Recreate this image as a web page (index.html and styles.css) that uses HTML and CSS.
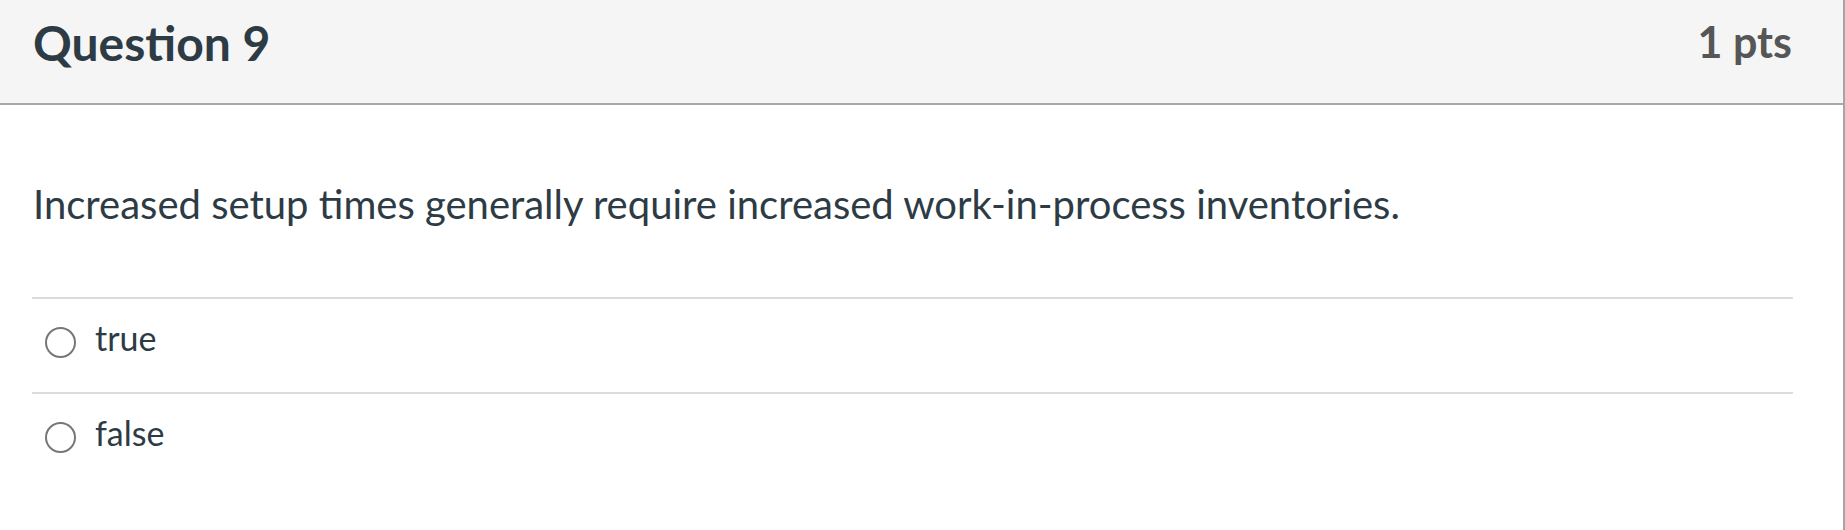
FILE: index.html
```html
<!DOCTYPE html>
<html lang="en">
<head>
<meta charset="utf-8">
<title>Question 9</title>
<link rel="stylesheet" href="styles.css">
</head>
<body>
<div class="question">
  <div class="q-header">
    <h2 class="q-title">Question 9</h2>
    <span class="q-points">1 pts</span>
  </div>
  <div class="q-body">
    <p class="q-text">Increased setup times generally require increased work-in-process inventories.</p>
    <div class="answers">
      <label class="answer">
        <span class="radio"></span>
        <span class="answer-label">true</span>
      </label>
      <label class="answer">
        <span class="radio"></span>
        <span class="answer-label">false</span>
      </label>
    </div>
  </div>
</div>
</body>
</html>
```

FILE: styles.css
```css
html, body {
  margin: 0;
  padding: 0;
  background: #ffffff;
}
body {
  font-family: Lato, "Open Sans", "Liberation Sans", sans-serif;
  color: #2d3b45;
  width: 1845px;
  height: 530px;
  overflow: hidden;
}
.question {
  box-sizing: border-box;
  width: 1845px;
  height: 530px;
  border-right: 2px solid #a5a5a5;
}
.q-header {
  display: flex;
  justify-content: space-between;
  align-items: flex-start;
  background: #f5f5f5;
  height: 105px;
  box-sizing: border-box;
  padding: 0 51px 0 33px;
  border-bottom: 2px solid #a8a8a8;
}
.q-title {
  margin: 0;
  font-size: 48px;
  font-weight: 700;
  line-height: 58px;
  padding-top: 14px;
  color: #2d3b45;
}
.q-points {
  font-size: 43px;
  font-weight: 700;
  line-height: 52px;
  padding-top: 16px;
  color: #565656;
}
.q-body {
  padding: 0 50px 0 32px;
}
.q-text {
  margin: 0;
  padding: 75px 0 0 1px;
  font-size: 40px;
  line-height: 48px;
  margin-bottom: 69px;
}
.answers {
  display: flex;
  flex-direction: column;
}
.answer {
  display: flex;
  align-items: flex-start;
  gap: 19px;
  height: 95px;
  box-sizing: border-box;
  border-top: 2px solid #dcdcdc;
  padding-left: 13px;
}
.radio {
  width: 31px;
  height: 31px;
  margin-top: 28px;
  box-sizing: border-box;
  border: 2.5px solid #777777;
  border-radius: 50%;
  flex: none;
}
.answer-label {
  font-size: 34px;
  line-height: 41px;
  margin-top: 18px;
  color: #2d3b45;
}
```
